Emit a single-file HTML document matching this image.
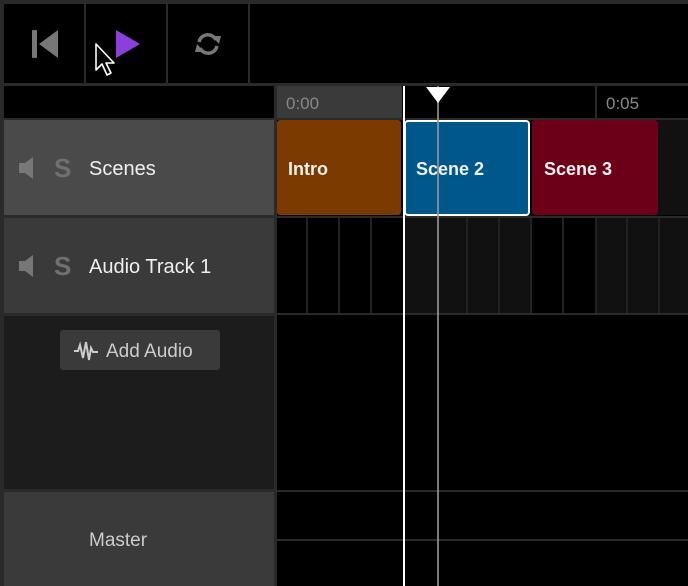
<!DOCTYPE html>
<html><head><style>
*{margin:0;padding:0;box-sizing:border-box}
body{width:688px;height:586px;background:#2a2a2a;position:relative;overflow:hidden;font-family:"Liberation Sans",Arial,sans-serif}
.a{position:absolute}
.cell{background:#000;top:4px;height:79px}
.lbl{color:#f0f0f0;font-size:20px}
</style></head><body>
<div class="a cell" style="left:4px;width:80px"></div>
<div class="a cell" style="left:86px;width:80px"></div>
<div class="a cell" style="left:168px;width:80px"></div>
<div class="a cell" style="left:250px;width:438px"></div>
<svg class="a" style="left:30px;top:28px" width="30" height="32"><rect x="2" y="2" width="5" height="28" rx="1" fill="#777"/><path d="M9 16 L28 2 L28 30 Z" fill="#777"/></svg>
<svg class="a" style="left:114px;top:28px" width="30" height="32"><path d="M2 2 L26 16 L2 30 Z" fill="#8b3fdc"/></svg>
<svg class="a" style="left:94px;top:42px" width="26" height="38"><path d="M2 2 L2 28 L8 22 L13 33 L17 31 L12 21 L20 21 Z" fill="#000" stroke="#fff" stroke-width="1.6" stroke-linejoin="round"/></svg>
<svg class="a" style="left:192px;top:30px" width="32" height="28"><g fill="none" stroke="#777" stroke-width="3.5"><path d="M7 12 A9 9 0 0 1 24 10"/><path d="M25 16 A9 9 0 0 1 8 18"/></g><path d="M20 6 L29 6 L27 14 Z" fill="#777"/><path d="M12 22 L3 22 L5 14 Z" fill="#777"/></svg>
<div class="a" style="left:4px;top:86px;width:270px;height:32px;background:#000"></div>
<div class="a" style="left:277px;top:86px;width:411px;height:32px;background:#000"></div>
<div class="a" style="left:277px;top:86px;width:125px;height:32px;background:#3a3a3a;color:#888;font-size:17px;padding:8px 0 0 9px">0:00</div>
<div class="a" style="left:595px;top:86px;width:2px;height:32px;background:#2a2a2a"></div>
<div class="a" style="left:606px;top:94px;color:#888;font-size:17px">0:05</div>
<div class="a" style="left:4px;top:120px;width:270px;height:95px;background:#4a4a4a"></div>
<div class="a" style="left:4px;top:218px;width:270px;height:95px;background:#3a3a3a"></div>
<div class="a" style="left:4px;top:316px;width:270px;height:173px;background:#1c1c1c"></div>
<div class="a" style="left:4px;top:492px;width:270px;height:94px;background:#3a3a3a"></div>
<svg class="a" style="left:17px;top:155px" width="20" height="26"><path d="M2 8 L8 8 L16 2 L16 24 L8 18 L2 18 Z" fill="#777"/></svg>
<div class="a" style="left:54px;top:153px;color:#707070;font-size:26px;font-weight:bold">S</div>
<div class="a lbl" style="left:89px;top:158px">Scenes</div>
<svg class="a" style="left:17px;top:253px" width="20" height="26"><path d="M2 8 L8 8 L16 2 L16 24 L8 18 L2 18 Z" fill="#777"/></svg>
<div class="a" style="left:54px;top:251px;color:#707070;font-size:26px;font-weight:bold">S</div>
<div class="a lbl" style="left:89px;top:256px">Audio Track 1</div>
<div class="a" style="left:60px;top:330px;width:160px;height:40px;background:#3a3a3a;border-radius:3px"></div>
<svg class="a" style="left:73px;top:340px" width="26" height="22"><path d="M1 11 L5 11 L7 5 L10 18 L13 2 L16 20 L18 8 L20 12 L25 12" fill="none" stroke="#ccc" stroke-width="2"/></svg>
<div class="a" style="left:106px;top:341px;color:#ccc;font-size:19px">Add Audio</div>
<div class="a" style="left:89px;top:530px;color:#ccc;font-size:19px">Master</div>
<div class="a" style="left:277px;top:120px;width:411px;height:466px;background:#000"></div>
<div class="a" style="left:658px;top:120px;width:30px;height:95px;background:#111"></div>
<div class="a" style="left:277px;top:120px;width:124px;height:95px;background:#7a3a00;border-radius:3px"></div>
<div class="a lbl" style="left:288px;top:159px;font-weight:bold;font-size:18px">Intro</div>
<div class="a" style="left:404px;top:120px;width:126px;height:96px;background:#00578a;border:2px solid #fff;border-radius:4px"></div>
<div class="a lbl" style="left:416px;top:159px;font-weight:bold;font-size:18px">Scene 2</div>
<div class="a" style="left:532px;top:120px;width:126px;height:95px;background:#6c0019;border-radius:3px"></div>
<div class="a lbl" style="left:544px;top:159px;font-weight:bold;font-size:18px">Scene 3</div>
<div class="a" style="left:404px;top:218px;width:126px;height:95px;background:#111"></div>
<div class="a" style="left:596px;top:218px;width:92px;height:95px;background:#111"></div>
<div class="a" style="left:277px;top:216px;width:411px;height:2px;background:#2a2a2a"></div>
<div class="a" style="left:277px;top:313px;width:411px;height:2px;background:#2a2a2a"></div>
<div class="a" style="left:277px;top:490px;width:411px;height:2px;background:#2a2a2a"></div>
<div class="a" style="left:277px;top:539px;width:411px;height:2px;background:#2a2a2a"></div>
<div class="a" style="left:306px;top:218px;width:2px;height:95px;background:#222"></div>
<div class="a" style="left:338px;top:218px;width:2px;height:95px;background:#222"></div>
<div class="a" style="left:370px;top:218px;width:2px;height:95px;background:#222"></div>
<div class="a" style="left:466px;top:218px;width:2px;height:95px;background:#222"></div>
<div class="a" style="left:498px;top:218px;width:2px;height:95px;background:#222"></div>
<div class="a" style="left:530px;top:218px;width:2px;height:95px;background:#222"></div>
<div class="a" style="left:562px;top:218px;width:2px;height:95px;background:#222"></div>
<div class="a" style="left:595px;top:218px;width:2px;height:95px;background:#222"></div>
<div class="a" style="left:626px;top:218px;width:2px;height:95px;background:#222"></div>
<div class="a" style="left:658px;top:218px;width:2px;height:95px;background:#222"></div>
<div class="a" style="left:274px;top:86px;width:3px;height:500px;background:#2a2a2a"></div>
<div class="a" style="left:403px;top:86px;width:2px;height:500px;background:#fff"></div>
<div class="a" style="left:437px;top:86px;width:2px;height:500px;background:#999;opacity:.8"></div>
<svg class="a" style="left:425px;top:86px" width="26" height="18"><path d="M1 1 L25 1 L13 17 Z" fill="#fff"/></svg>
</body></html>
